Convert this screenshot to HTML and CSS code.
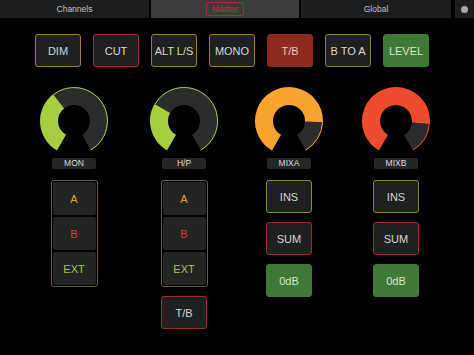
FILE: index.html
```html
<!DOCTYPE html>
<html>
  <head>
    <title>Master</title>
    <link rel="stylesheet" href="styles.css">
  </head>
  <body>
    <div class="tabs">
      <div class="tab">Channels</div>
      <div class="tab tab-active"><span class="tab-mark">Master</span></div>
      <div class="tab">Global</div>
      <div class="tab-end"><span class="dot"></span></div>
    </div>

    <div class="toolbar">
      <button class="btn btn-amber">DIM</button>
      <button class="btn btn-red">CUT</button>
      <button class="btn btn-amber">ALT L/S</button>
      <button class="btn btn-amber">MONO</button>
      <button class="btn btn-fill-red">T/B</button>
      <button class="btn btn-olive">B TO A</button>
      <button class="btn btn-fill-green">LEVEL</button>
    </div>

    <div class="strips">
      <div class="strip">
        <svg class="knob" viewBox="-35 -35 70 70">
          <path class="knob-rest" d="M -15.39 -19.70 A 25 25 0 1 1 12.5 21.65"/>
          <path class="knob-edge" stroke="#a5cf3c" d="M -20.63 -26.40 A 33.5 33.5 0 1 1 16.75 29.01"/>
          <path class="knob-val" stroke="#a5cf3c" d="M -12.5 21.65 A 25 25 0 0 1 -15.39 -19.70"/>
        </svg>
        <div class="knob-label">MON</div>
        <div class="stack">
          <button class="cell cell-a">A</button>
          <button class="cell cell-b">B</button>
          <button class="cell cell-ext">EXT</button>
        </div>
      </div>

      <div class="strip">
        <svg class="knob" viewBox="-35 -35 70 70">
          <path class="knob-rest" d="M -21.65 -12.5 A 25 25 0 1 1 12.5 21.65"/>
          <path class="knob-edge" stroke="#a5cf3c" d="M -29.01 -16.75 A 33.5 33.5 0 1 1 16.75 29.01"/>
          <path class="knob-val" stroke="#a5cf3c" d="M -12.5 21.65 A 25 25 0 0 1 -21.65 -12.5"/>
        </svg>
        <div class="knob-label">H/P</div>
        <div class="stack">
          <button class="cell cell-a">A</button>
          <button class="cell cell-b">B</button>
          <button class="cell cell-ext">EXT</button>
        </div>
        <button class="btn btn-red strip-btn">T/B</button>
      </div>

      <div class="strip">
        <svg class="knob" viewBox="-35 -35 70 70">
          <path class="knob-rest" d="M 24.98 0.87 A 25 25 0 0 1 12.5 21.65"/>
          <path class="knob-edge" stroke="#f7a52b" d="M 33.48 1.17 A 33.5 33.5 0 0 1 16.75 29.01"/>
          <path class="knob-val" stroke="#f7a52b" d="M -12.5 21.65 A 25 25 0 1 1 24.98 0.87"/>
        </svg>
        <div class="knob-label">MIXA</div>
        <div class="col-btns">
          <button class="btn btn-olive">INS</button>
          <button class="btn btn-red">SUM</button>
          <button class="btn btn-fill-green">0dB</button>
        </div>
      </div>

      <div class="strip">
        <svg class="knob" viewBox="-35 -35 70 70">
          <path class="knob-rest" d="M 24.90 2.18 A 25 25 0 0 1 12.5 21.65"/>
          <path class="knob-edge" stroke="#ee4c2c" d="M 33.37 2.92 A 33.5 33.5 0 0 1 16.75 29.01"/>
          <path class="knob-val" stroke="#ee4c2c" d="M -12.5 21.65 A 25 25 0 1 1 24.90 2.18"/>
        </svg>
        <div class="knob-label">MIXB</div>
        <div class="col-btns">
          <button class="btn btn-olive">INS</button>
          <button class="btn btn-red">SUM</button>
          <button class="btn btn-fill-green">0dB</button>
        </div>
      </div>
    </div>
  </body>
</html>
```

FILE: styles.css
```css
body {
  margin: 0;
  background-color: #000;
  color: #d8d8d8;
  font-family: "Liberation Sans", Arial, sans-serif;
}

/* top tab bar */
.tabs {
  display: grid;
  grid-template-columns: 149px 148px 150px 1fr;
  column-gap: 2px;
  height: 18px;
  background-color: #000;
}

.tab {
  display: flex;
  align-items: center;
  justify-content: center;
  background-color: #1c1d1e;
  color: #c4c4c4;
  font-size: 8.5px;
}

.tab-active {
  background-color: #3b3c3c;
}

.tab-mark {
  padding: 1px 5px;
  border: 1px solid #b02c2a;
  border-radius: 2px;
  color: #c8302c;
}

.tab-end {
  display: flex;
  align-items: center;
  justify-content: center;
  margin-left: 2px;
  background-color: #1c1d1e;
}

.dot {
  width: 7px;
  height: 7px;
  border-radius: 50%;
  background-color: #a9a9a9;
}

/* buttons */
button {
  font-family: inherit;
  cursor: pointer;
}

.btn {
  width: 46px;
  height: 33px;
  padding: 0;
  border: 1px solid #444;
  border-radius: 3px;
  background-color: #1f2020;
  color: #d6d6d6;
  font-size: 11px;
}

.btn-amber {
  border-color: #a27a2c;
}

.btn-red {
  border-color: #a02a2a;
}

.btn-olive {
  border-color: #8d8a3c;
}

.btn-fill-red {
  border-color: #8c2a1e;
  background-color: #8c2a1e;
  color: #e0c8c4;
}

.btn-fill-green {
  border-color: #3e7a35;
  background-color: #3e7a35;
  color: #d6e6d2;
}

.toolbar {
  display: flex;
  gap: 12px;
  margin-top: 16px;
  padding-left: 35px;
}

/* channel strips */
.strips {
  display: grid;
  grid-template-columns: 110px 105px 107px 70px;
  margin-top: 19px;
  padding-left: 39px;
}

.strip {
  display: flex;
  flex-direction: column;
  align-items: center;
  width: 70px;
}

.knob {
  width: 70px;
  height: 70px;
}

.knob path {
  fill: none;
}

.knob-rest {
  stroke: #2b2c2c;
  stroke-width: 18;
}

.knob-val {
  stroke-width: 18;
}

.knob-edge {
  stroke-width: 1;
}

.knob-label {
  width: 44px;
  height: 11px;
  margin-top: 2px;
  border-radius: 2px;
  background-color: #252627;
  color: #dcdcdc;
  font-size: 8.5px;
  line-height: 11px;
  text-align: center;
}

.stack {
  display: flex;
  flex-direction: column;
  gap: 2px;
  width: 47px;
  margin-top: 11px;
  padding: 1px;
  box-sizing: border-box;
  border: 1px solid #6b5a48;
  border-radius: 3px;
  background-color: #000;
}

.cell {
  height: 33px;
  padding: 0;
  border: none;
  border-radius: 2px;
  background-color: #232424;
  font-size: 11px;
}

.cell-a {
  color: #e1a43a;
}

.cell-b {
  color: #d8403c;
}

.cell-ext {
  color: #a6c545;
}

.strip-btn {
  margin-top: 9px;
}

.col-btns {
  display: flex;
  flex-direction: column;
  gap: 9px;
  margin-top: 11px;
}
```
